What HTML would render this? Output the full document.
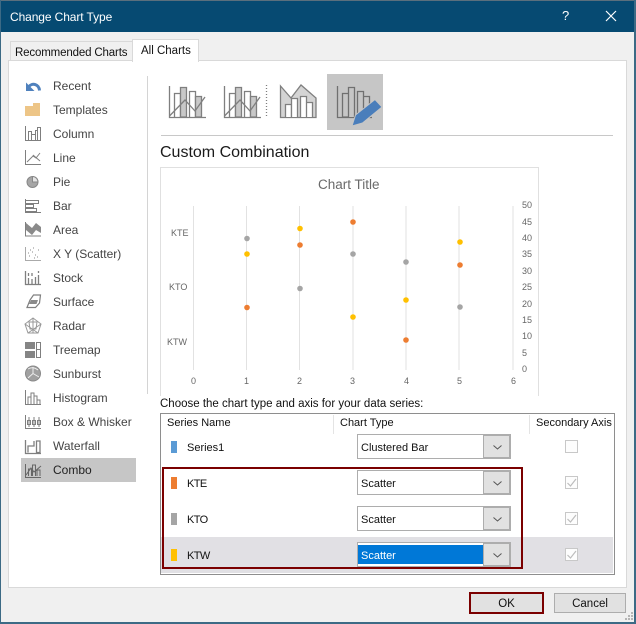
<!DOCTYPE html>
<html><head><meta charset="utf-8"><style>
html,body{margin:0;padding:0;width:636px;height:624px;overflow:hidden;background:#f0f0f0}
body{position:relative;font-family:"Liberation Sans",sans-serif;font-size:12px;color:#1a1a1a}
.a{position:absolute;white-space:nowrap}
.i{color:#444;font-size:12px;left:53px;line-height:16px}
.cl{position:absolute;font-size:9px;color:#666;line-height:10px;white-space:nowrap}
.sw{position:absolute;left:171px;width:6px;height:12px}
.sn{position:absolute;left:187px;line-height:16px;color:#111;font-size:11px}
.cb{position:absolute;left:357px;width:152px;height:23px;border:1px solid #adadad;background:#fff}
.cb .t{position:absolute;left:3px;top:6px;line-height:15px;font-size:11px;color:#111}
.cb .b{position:absolute;right:-1px;top:-1px;width:25px;background:#e1e1e1;border:1px solid #adadad;border-width:2px 2px 2px 1px;height:21px}
.ck{position:absolute;left:565px;width:11px;height:11px;border:1px solid #c8c8c8;background:#fdfdfd}
.h{line-height:16px;font-size:11px;color:#111}
</style></head><body>
<div class="a" style="left:0;top:0;width:636px;height:32px;background:#064a72;border-top:1px solid #5a6f7d;box-sizing:border-box"></div>
<div class="a" style="left:10px;top:9px;color:#fff;font-size:12px;line-height:16px;letter-spacing:-.1px">Change Chart Type</div>
<div class="a" style="left:562px;top:8px;color:#fff;font-size:13px;line-height:16px">?</div>
<svg class="a" style="left:605px;top:10px" width="12" height="12"><path d="M1 1L11 11M11 1L1 11" stroke="#fff" stroke-width="1.2"/></svg>
<div class="a" style="left:0;top:0;width:1px;height:624px;background:#3c6a85"></div>
<div class="a" style="left:634px;top:0;width:2px;height:624px;background:#3c6a85"></div>
<div class="a" style="left:0;top:622px;width:636px;height:2px;background:#3c6a85"></div>

<div class="a" style="left:10px;top:41px;width:122px;height:20px;border:1px solid #d9d9d9;background:#f0f0f0"></div>
<div class="a" style="left:15px;top:45px;line-height:16px;color:#111;font-size:11.500px;letter-spacing:-.15px">Recommended Charts</div>
<div class="a" style="left:8px;top:60px;width:617px;height:526px;border:1px solid #d9d9d9;background:#fff"></div>
<div class="a" style="left:132px;top:39px;width:65px;height:22px;border:1px solid #d9d9d9;border-bottom:0;background:#fff"></div>
<div class="a" style="left:141px;top:43px;line-height:16px;color:#111;font-size:11.500px">All Charts</div>

<div class="a" style="left:147px;top:76px;width:1px;height:318px;background:#d4d4d4"></div>
<div class="a" style="left:21px;top:458px;width:115px;height:24px;background:#c6c6c6"></div>

<div class="a i" style="top:78px">Recent</div>
<div class="a i" style="top:102px">Templates</div>
<div class="a i" style="top:126px">Column</div>
<div class="a i" style="top:150px">Line</div>
<div class="a i" style="top:174px">Pie</div>
<div class="a i" style="top:198px">Bar</div>
<div class="a i" style="top:222px">Area</div>
<div class="a i" style="top:246px">X Y (Scatter)</div>
<div class="a i" style="top:270px">Stock</div>
<div class="a i" style="top:294px">Surface</div>
<div class="a i" style="top:318px">Radar</div>
<div class="a i" style="top:342px">Treemap</div>
<div class="a i" style="top:366px">Sunburst</div>
<div class="a i" style="top:390px">Histogram</div>
<div class="a i" style="top:414px">Box &amp; Whisker</div>
<div class="a i" style="top:438px">Waterfall</div>
<div class="a i" style="top:462px;color:#222">Combo</div>

<svg class="a" style="left:0;top:0" width="150" height="490" fill="none" stroke="#7f7f7f" stroke-width="1">
<path d="M39.500 90.500C39 84 32 82.500 29 86.500" stroke="#4f81bd" stroke-width="3"/><path d="M26 82.500V91H34.500Z" fill="#4f81bd" stroke="none"/>
<path d="M25 106H33V103H40V116H25Z" fill="#edc587" stroke="none"/>
<path d="M25.500 126V140.500H41M28.500 140V131.500H31.500V140M31.500 140V134.500H35.500V140M35.500 140V130.500H37.500V140M37.500 140V127.500H40.500V140"/>
<path d="M25.500 150V164.500H41M27 162L33 156L36 158L40 153M33 155L40 161"/>
<circle cx="32.500" cy="182" r="5.500" fill="#a6a6a6" stroke="#888"/><path d="M32.500 182V176.500A5.500 5.500 0 0 1 38 182Z" fill="#e4e4e4" stroke="#888"/>
<path d="M25.500 199V212.500H41M26 200.500H38.500V203.500H26M26 204.500H33.500V207.500H26M26 208.500H36.500V211.500H26"/>
<path d="M25.500 222V236H41"/><path d="M26 223L32 228L36 223L41 227V233L36 230L32 235L26 230Z" fill="#8a8a8a" stroke="none"/>
<path d="M25.500 247V260.500H41" stroke="#aaa"/><path d="M29 256h1M32 252h1M35 255h1M38 250h1M30 250h1M34 258h1M37 257h1M28 253h1M33 248h1" stroke="#888"/>
<path d="M25.500 271V284.500H41M28.500 284V278M28.500 273V276M32 284V279M32 273V276M35.500 284V277M38.500 284V275M38.500 271V273" stroke-width="1.300"/>
<path d="M27 307.500L30 300L33.500 295H40.500L39.500 303L35.500 307.500Z" stroke-width="1.200"/><path d="M29 304L31 300H38L36.500 304Z" fill="#8a8a8a" stroke="none"/>
<path d="M33 318L41 324L38 333H28L25 324ZM33 318V333M25 324L38 333M41 324L28 333M29 322L37 322L36 329H30Z" stroke="#999"/>
<path d="M25 342H35V349H25ZM25 351H35V358H25Z" fill="#858585" stroke="none"/><path d="M36.500 342.500H40.500V357.500H36.500ZM36.500 349.500H40.500"/>
<circle cx="33" cy="373.500" r="7.500" fill="#a0a0a0" stroke="#888"/><path d="M33 373.500L28 378M33 373.500V367M33 373.500L39 377M28 369Q33 366 38 370" stroke="#eee"/>
<path d="M25.500 390V404.500H41M28 404V397H31V404M31 404V393H34V404M34 404V396H37V404M37 404V400H40V404"/>
<path d="M25.500 415V428.500H41M29 417V427M34 417V427M39 417V427M27.500 420.500H30.500V424.500H27.500ZM32.500 420.500H35.500V424.500H32.500ZM37.500 420.500H40.500V424.500H37.500Z"/>
<path d="M25.500 440V453.500H41M28 452.500V446H34V441M36.500 441H40V452.500H36.500Z" stroke-width="1.300"/>
<path d="M25.500 464V477.500H41M28.500 476V469H31.500V476M32.500 476V465H35.500V476M37 476V470H40V476M26 475L31 468L34 472L41 466" stroke="#666"/>
</svg>

<div class="a" style="left:327px;top:74px;width:56px;height:56px;background:#c6c6c6"></div>
<svg class="a" style="left:150px;top:65px" width="250" height="70" fill="none" stroke="#7f7f7f" stroke-width="1.300">
<path d="M19.500 21V52.500H56"/><path d="M24.500 52V28.500H30.500V52M39.500 52V26.500H45.500V52"/><path d="M30.500 22.500H36.500V52H30.500ZM45.500 31.500H51.500V52H45.500Z" fill="#c8c8c8"/><path d="M19.500 51L35 35L45 46L55 32"/>
<g transform="translate(55 0)"><path d="M19.500 21V52.500H56"/><path d="M24.500 52V28.500H30.500V52M39.500 52V26.500H45.500V52"/><path d="M30.500 22.500H36.500V52H30.500ZM45.500 31.500H51.500V52H45.500Z" fill="#c8c8c8"/><path d="M19.500 51L35 35L45 46L55 32"/><path d="M61.500 20V52" stroke-dasharray="1 2"/></g>
<path d="M130.500 21L141 33L151 20L166 33V52.500H130.500Z" fill="#d4d4d4"/><path d="M135.500 52V39.500H141.500V52M150.500 52V31.500H156.500V52M156.500 52V37.500H162.500V52" fill="#fff"/><path d="M141.500 52V33.500H147.500V52" fill="#fff"/>
<g stroke="#707070"><path d="M187.500 21V52.500H222"/><path d="M192.500 52V28.500H198.500V52H192.500M198.500 52V22.500H204.500V52M207.500 52V26.500H213.500V52H207.500M213.500 52V31.500H219.500V52" fill="#c6c6c6"/></g>
<path d="M202 61L205.500 50L225 34.500L232 42L212.500 58Z" fill="#4a7ebb" stroke="#c6c6c6" stroke-width="1"/>
</svg>
<div class="a" style="left:161px;top:135px;width:452px;height:1px;background:#c8c8c8"></div>
<div class="a" style="left:160px;top:144px;font-size:16px;line-height:18px;color:#1a1a1a">Custom Combination</div>

<div class="a" style="left:160px;top:167px;width:377px;height:240px;border:1px solid #e0e0e0;border-bottom:0;background:#fff"></div>
<div class="a" style="left:318px;top:177px;font-size:13.500px;line-height:16px;color:#6a6a6a">Chart Title</div>
<svg class="a" style="left:160px;top:200px" width="380" height="175">
<path d="M33.500 6V170M86.500 6V170M139.500 6V170M193 6V170M246 6V170M299 6V170M353 6V170" stroke="#e2e2e2" stroke-width="1"/>
<g fill="#a5a5a5"><circle cx="87" cy="38.500" r="2.800"/><circle cx="140" cy="88.500" r="2.800"/><circle cx="193" cy="54" r="2.800"/><circle cx="246" cy="62" r="2.800"/><circle cx="300" cy="107" r="2.800"/></g>
<g fill="#ffc000"><circle cx="87" cy="54" r="2.800"/><circle cx="140" cy="28.500" r="2.800"/><circle cx="193" cy="117" r="2.800"/><circle cx="246" cy="100" r="2.800"/><circle cx="300" cy="42" r="2.800"/></g>
<g fill="#ed7d31"><circle cx="87" cy="107.500" r="2.800"/><circle cx="140" cy="45" r="2.800"/><circle cx="193" cy="22" r="2.800"/><circle cx="246" cy="140" r="2.800"/><circle cx="300" cy="65" r="2.800"/></g>
</svg>
<div class="cl" style="left:171px;top:228px">KTE</div><div class="cl" style="left:169px;top:282px">KTO</div><div class="cl" style="left:167px;top:337px">KTW</div>
<div class="cl" style="left:191px;top:376px">0</div><div class="cl" style="left:244px;top:376px">1</div><div class="cl" style="left:297px;top:376px">2</div><div class="cl" style="left:350px;top:376px">3</div><div class="cl" style="left:404px;top:376px">4</div><div class="cl" style="left:457px;top:376px">5</div><div class="cl" style="left:511px;top:376px">6</div>
<div class="cl" style="left:522px;top:200px">50</div><div class="cl" style="left:522px;top:217px">45</div><div class="cl" style="left:522px;top:233px">40</div><div class="cl" style="left:522px;top:249px">35</div><div class="cl" style="left:522px;top:266px">30</div><div class="cl" style="left:522px;top:282px">25</div><div class="cl" style="left:522px;top:299px">20</div><div class="cl" style="left:522px;top:315px">15</div><div class="cl" style="left:522px;top:331px">10</div><div class="cl" style="left:522px;top:348px">5</div><div class="cl" style="left:522px;top:364px">0</div>

<div class="a" style="left:160px;top:396px;width:380px;height:18px;background:#fff"></div>
<div class="a" style="left:160px;top:396px;line-height:16px;font-size:11.500px;color:#111">Choose the chart type and axis for your data series:</div>
<div class="a" style="left:160px;top:413px;width:453px;height:160px;border:1px solid #8e8e8e;background:#fff"></div>
<div class="a" style="left:161px;top:537px;width:452px;height:36px;background:#e1e0e4"></div>
<div class="a" style="left:333px;top:415px;width:1px;height:19px;background:#e4e4e4"></div>
<div class="a" style="left:529px;top:415px;width:1px;height:19px;background:#e4e4e4"></div>
<div class="a h" style="left:167px;top:415px">Series Name</div>
<div class="a h" style="left:340px;top:415px">Chart Type</div>
<div class="a h" style="left:536px;top:415px">Secondary Axis</div>

<div class="sw" style="top:441px;background:#5b9bd5"></div><div class="sn" style="top:440px">Series1</div>
<div class="sw" style="top:477px;background:#ed7d31"></div><div class="sn" style="top:476px;letter-spacing:-.6px">KTE</div>
<div class="sw" style="top:513px;background:#a5a5a5"></div><div class="sn" style="top:512px;letter-spacing:-.6px">KTO</div>
<div class="sw" style="top:549px;background:#ffc000"></div><div class="sn" style="top:548px;letter-spacing:-.6px">KTW</div>

<div class="cb" style="top:434px"><div class="t">Clustered Bar</div><div class="b"></div></div>
<div class="cb" style="top:470px"><div class="t">Scatter</div><div class="b"></div></div>
<div class="cb" style="top:506px"><div class="t">Scatter</div><div class="b"></div></div>
<div class="cb" style="top:542px"><div class="a" style="left:0;top:2px;width:126px;height:19px;background:#0078d7"></div><div class="t" style="color:#fff">Scatter</div><div class="b"></div></div>
<svg class="a" style="left:490px;top:430px" width="20" height="140" fill="none" stroke="#555" stroke-width="1"><path d="M3.500 15.500L7.500 19L11.500 15.500M3.500 51.500L7.500 55L11.500 51.500M3.500 87.500L7.500 91L11.500 87.500M3.500 123.500L7.500 127L11.500 123.500"/></svg>

<div class="ck" style="top:440px"></div><div class="ck" style="top:476px"></div><div class="ck" style="top:512px"></div><div class="ck" style="top:548px"></div>
<svg class="a" style="left:565px;top:470px" width="14" height="90" fill="none" stroke="#bdbdbd" stroke-width="1.200"><path d="M2.500 13L5.500 16L11 9M2.500 49L5.500 52L11 45M2.500 85L5.500 88L11 81"/></svg>
<div class="a" style="left:162px;top:467px;width:357px;height:98px;border:2px solid #7b0000"></div>

<div class="a" style="left:469px;top:592px;width:71px;height:18px;border:2px solid #7b0000;background:#e1e1e1;text-align:center;line-height:21px;color:#111;font-size:11.500px">OK</div>
<div class="a" style="left:554px;top:593px;width:70px;height:18px;border:1px solid #adadad;background:#e1e1e1;text-align:center;line-height:21px;color:#111;font-size:11.500px">Cancel</div>
<svg class="a" style="left:624px;top:611px" width="10" height="10" fill="#b5b5b5"><path d="M7 1h2v2H7zM4 4h2v2H4zM7 4h2v2H7zM1 7h2v2H1zM4 7h2v2H4zM7 7h2v2H7z"/></svg>
</body></html>
